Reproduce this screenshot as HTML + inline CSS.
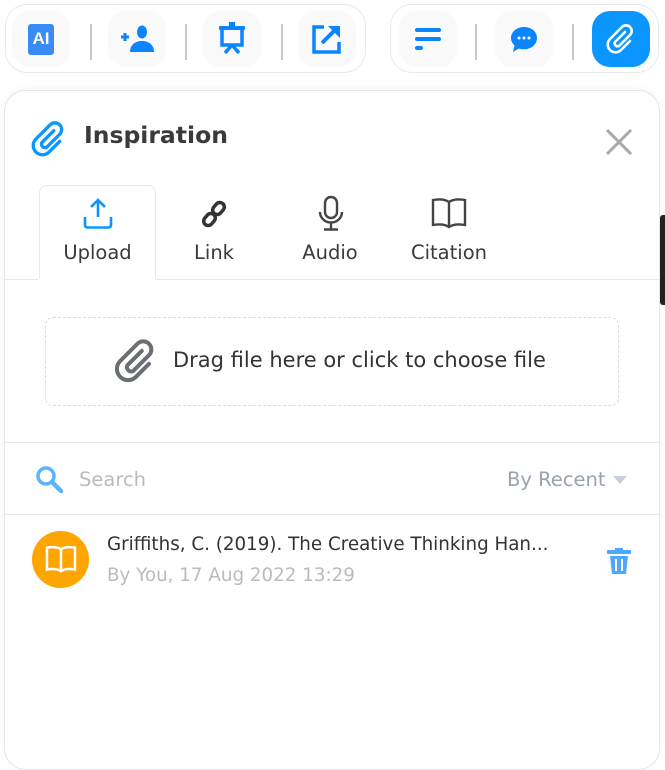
<!DOCTYPE html>
<html><head><meta charset="utf-8"><style>
*{box-sizing:border-box;margin:0;padding:0}
body{width:665px;height:684px;overflow:hidden;background:#fff;font-family:"Liberation Sans","DejaVu Sans",sans-serif;position:relative}
.grp{position:absolute;top:4px;height:69px;border:1px solid #e6e9ee;border-radius:22px;background:#fff}
.btn{position:absolute;top:6px;width:58px;height:56px;border-radius:18px;background:#fafafa;display:flex;align-items:center;justify-content:center}
.sep{position:absolute;top:19px;width:2px;height:36px;background:#c8c8c8}
.panel{position:absolute;left:4px;top:90px;width:656px;height:680px;border:1px solid #e3e6ea;border-radius:22px;background:#fff;box-shadow:0 -2px 6px rgba(0,0,0,.04)}
.t{position:absolute;white-space:nowrap}
.hl{position:absolute;left:5px;width:654px;height:1px;background:#e6e8ea}
</style></head><body>
<div style="position:absolute;left:660px;top:215px;width:5px;height:90px;background:#222;border-radius:3px 0 0 3px"></div>
<div class="grp" style="left:5px;width:361px">
 <div class="btn" style="left:6px"><div style="width:26px;height:31px;background:#3b8bf5;border-radius:3px;color:#fff;font-weight:bold;font-size:17px;display:flex;align-items:center;justify-content:center">AI</div></div>
 <div class="sep" style="left:84px"></div>
 <div class="btn" style="left:102px"><svg width="36" height="30" viewBox="0 0 36 30"><path d="M2 13h8M6 9v8" stroke="#0a84ff" stroke-width="3"/><ellipse cx="23" cy="8" rx="5" ry="6.5" fill="#0a84ff"/><path d="M11 28c0-7 5-11 12-11s12 4 12 11z" fill="#0a84ff"/></svg></div>
 <div class="sep" style="left:179px"></div>
 <div class="btn" style="left:197px"><svg width="30" height="34" viewBox="0 0 30 34"><rect x="12" y="0" width="6" height="4" fill="#0a84ff"/><rect x="2" y="4" width="26" height="4" rx="1" fill="#0a84ff"/><path d="M5 8v15h20V8" stroke="#0a84ff" stroke-width="3.5" fill="none"/><path d="M15 23l-7 8M15 23l7 8" stroke="#0a84ff" stroke-width="3.5"/></svg></div>
 <div class="sep" style="left:275px"></div>
 <div class="btn" style="left:292px"><svg width="30" height="30" viewBox="0 0 30 30"><path d="M12 3H2v25h25V18" stroke="#0a84ff" stroke-width="3.5" fill="none"/><path d="M10 19l13-13" stroke="#0a84ff" stroke-width="4"/><path d="M16 2h12v12z" fill="#0a84ff"/></svg></div>
</div>
<div class="grp" style="left:390px;width:269px">
 <div class="btn" style="left:8px"><svg width="26" height="22" viewBox="0 0 26 22"><g stroke="#0a84ff" stroke-width="4" stroke-linecap="round"><path d="M2 2h22M2 11h22M2 20h4"/></g></svg></div>
 <div class="sep" style="left:84px"></div>
 <div class="btn" style="left:104px"><svg width="30" height="30" viewBox="0 0 30 30"><path d="M15 3C7.5 3 2 8 2 14c0 3 1.5 5.5 3.5 7.5L4 28l6-3.5c1.6.5 3.2.8 5 .8 7.5 0 13-5 13-11.3S22.5 3 15 3z" fill="#0a84ff"/><g fill="#fff"><circle cx="10" cy="14" r="1.5"/><circle cx="15" cy="14" r="1.5"/><circle cx="20" cy="14" r="1.5"/></g></svg></div>
 <div class="sep" style="left:181px"></div>
 <div class="btn" style="left:201px;background:#0a95ff"><svg width="32" height="32" viewBox="0 0 32 32"><path d="M20 9L10 19a3 3 0 0 0 4 4l11-11a5.5 5.5 0 0 0-8-8L5 16a7.5 7.5 0 0 0 11 11l9-9" stroke="#fff" stroke-width="2.6" fill="none" stroke-linecap="round"/></svg></div>
</div>

<div class="panel"></div>
<svg style="position:absolute;left:30px;top:120px" width="38" height="38" viewBox="0 0 32 32"><path d="M20 9L10 19a3 3 0 0 0 4 4l11-11a5.5 5.5 0 0 0-8-8L5 16a7.5 7.5 0 0 0 11 11l9-9" stroke="#0a95ff" stroke-width="2.8" fill="none" stroke-linecap="round"/></svg>
<div class="t" style="left:84px;top:121px;color:#3a3a3a;font-family:'DejaVu Sans',sans-serif;font-size:23.5px;font-weight:bold">Inspiration</div>
<svg style="position:absolute;left:605px;top:128px" width="28" height="28" viewBox="0 0 28 28"><path d="M2 2l24 24M26 2L2 26" stroke="#a8a8a8" stroke-width="3"/></svg>

<div style="position:absolute;left:39px;top:185px;width:117px;height:96px;border:1px solid #e6e8ea;border-bottom:none;border-radius:8px 8px 0 0;background:#fff"></div>
<div class="hl" style="top:279px"></div>
<div style="position:absolute;left:39px;top:279px;width:117px;height:2px;background:#fff"></div>
<svg style="position:absolute;left:82px;top:198px" width="32" height="32" viewBox="0 0 32 32"><path d="M16 3v16M9 9l7-7 7 7" stroke="#0a95ff" stroke-width="2.6" fill="none"/><path d="M3 19v8c0 1.5 1 2.5 2.5 2.5h21c1.5 0 2.5-1 2.5-2.5v-8" stroke="#0a95ff" stroke-width="2.6" fill="none"/></svg>
<div class="t" style="left:39px;width:117px;text-align:center;top:241px;color:#3a3a3a;font-family:'DejaVu Sans',sans-serif;font-size:19.5px">Upload</div>
<svg style="position:absolute;left:199px;top:198px" width="30" height="32" viewBox="0 0 30 32"><g stroke="#333" stroke-width="3.5" fill="none"><rect x="15" y="4" width="9" height="13" rx="4.5" transform="rotate(40 19.5 10.5)"/><rect x="6" y="15" width="9" height="13" rx="4.5" transform="rotate(40 10.5 21.5)"/></g></svg>
<div class="t" style="left:164px;width:100px;text-align:center;top:241px;font-family:'DejaVu Sans',sans-serif;font-size:19.5px;color:#3a3a3a">Link</div>
<svg style="position:absolute;left:317px;top:195px" width="28" height="38" viewBox="0 0 28 38"><rect x="8" y="2" width="12" height="21" rx="6" stroke="#444" stroke-width="2.4" fill="none"/><path d="M3 17c0 6 5 10.5 11 10.5S25 23 25 17M14 27.5v6M7 34.5h14" stroke="#444" stroke-width="2.4" fill="none"/></svg>
<div class="t" style="left:280px;width:100px;text-align:center;top:241px;font-family:'DejaVu Sans',sans-serif;font-size:19.5px;color:#3a3a3a">Audio</div>
<svg style="position:absolute;left:431px;top:197px" width="36" height="32" viewBox="0 0 36 32"><path d="M18 5C14 2 8 2 2 3v25c6-1 12-1 16 2 4-3 10-3 16-2V3c-6-1-12-1-16 2zM18 5v25" stroke="#444" stroke-width="2.4" fill="none"/></svg>
<div class="t" style="left:399px;width:100px;text-align:center;top:241px;font-family:'DejaVu Sans',sans-serif;font-size:19.5px;color:#3a3a3a">Citation</div>

<div style="position:absolute;left:45px;top:317px;width:574px;height:89px;border:1px dashed #dcdcdc;border-radius:8px"></div>
<svg style="position:absolute;left:113px;top:337px" width="46" height="48" viewBox="0 0 32 32"><path d="M20 9L10 19a3 3 0 0 0 4 4l11-11a5.5 5.5 0 0 0-8-8L5 16a7.5 7.5 0 0 0 11 11l9-9" stroke="#6b6f75" stroke-width="2.8" fill="none" stroke-linecap="round"/></svg>
<div class="t" style="left:173px;top:348px;font-family:'DejaVu Sans',sans-serif;font-size:21px;color:#333">Drag file here or click to choose file</div>

<div class="hl" style="top:442px"></div>
<svg style="position:absolute;left:35px;top:465px" width="30" height="30" viewBox="0 0 30 30"><circle cx="11" cy="11" r="8" stroke="#5ab4ff" stroke-width="3.5" fill="none"/><path d="M17 17l9 9" stroke="#5ab4ff" stroke-width="4.5" stroke-linecap="round"/></svg>
<div class="t" style="left:79px;top:468px;font-family:'DejaVu Sans',sans-serif;font-size:19.5px;color:#b8bcc2">Search</div>
<div class="t" style="left:507px;top:468px;font-family:'DejaVu Sans',sans-serif;font-size:19.5px;color:#9aa3ad">By Recent</div>
<svg style="position:absolute;left:613px;top:476px" width="14" height="8"><path d="M0 0h14L7 8z" fill="#c6d0da"/></svg>
<div class="hl" style="top:514px"></div>

<div style="position:absolute;left:32px;top:531px;width:57px;height:57px;border-radius:50%;background:#ffa500"></div>
<svg style="position:absolute;left:45px;top:545px" width="32" height="28" viewBox="0 0 36 32"><path d="M18 5C14 2 8 2 2 3v25c6-1 12-1 16 2 4-3 10-3 16-2V3c-6-1-12-1-16 2zM18 5v25" stroke="#fff" stroke-width="2.8" fill="none"/></svg>
<div class="t" style="left:107px;top:534px;font-family:'DejaVu Sans',sans-serif;font-size:18.3px;color:#333">Griffiths, C. (2019). The Creative Thinking Han...</div>
<div class="t" style="left:107px;top:565px;font-family:'DejaVu Sans',sans-serif;font-size:18.3px;color:#b8bcc2">By You, 17 Aug 2022 13:29</div>
<svg style="position:absolute;left:606px;top:546px" width="26" height="30" viewBox="0 0 26 30"><path d="M9 2h8v3H9z" fill="#4da6ff"/><rect x="1" y="4" width="24" height="4" rx="1" fill="#4da6ff"/><path d="M4 10h18l-2 18H6z" fill="#4da6ff"/><path d="M10 13v12M16 13v12" stroke="#fff" stroke-width="2"/></svg>
</body></html>
